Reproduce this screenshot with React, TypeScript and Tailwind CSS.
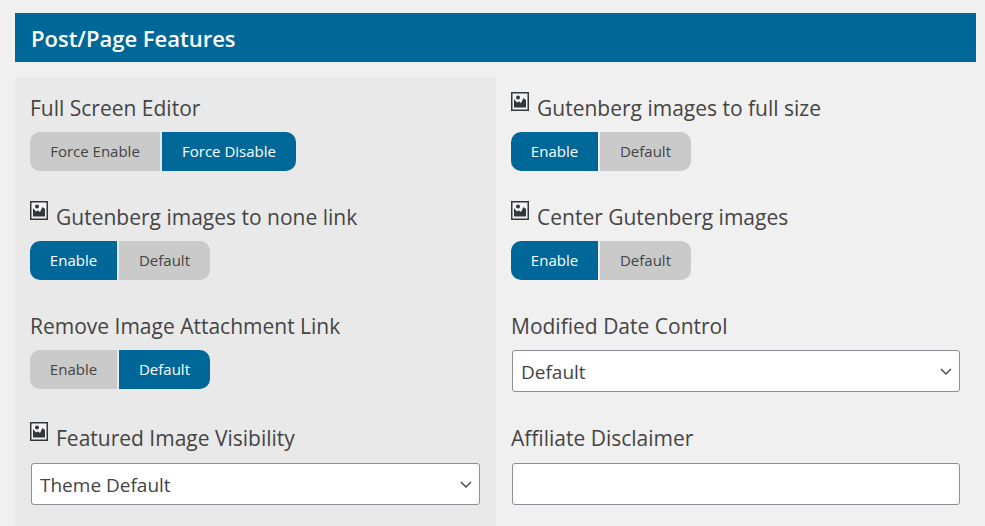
function ImageIcon() {
  return (
    <svg width="18" height="19" viewBox="0 0 18 19" className="mb-[11px] mr-2 inline-block shrink-0">
      <rect x="0.75" y="0.75" width="16.5" height="17.5" fill="#f4f4f4" stroke="#32373c" strokeWidth="1.5" />
      <circle cx="7" cy="5.5" r="2" fill="#32373c" />
      <path d="M3 15.5V7l3 3.5 2-1 2 1.5 2.5-5 2.5 2V15.5z" fill="#32373c" />
    </svg>
  );
}

function Label({ text, icon }: { text: string; icon?: boolean }) {
  return (
    <div className="flex h-[28px] items-end whitespace-nowrap text-[21px] leading-[28px] text-[#444]">
      {icon && <ImageIcon />}
      <span>{text}</span>
    </div>
  );
}

function Toggle({ options, active }: { options: { label: string; width: string }[]; active: number }) {
  return (
    <div className="mt-[10px] flex gap-[2px]">
      {options.map((o, i) => (
        <button
          key={o.label}
          className={`h-[39px] text-[15px] ${o.width} ${i === 0 ? 'rounded-l-[10px]' : 'rounded-r-[10px]'} ${
            i === active ? 'bg-[#006799] text-white' : 'bg-[#cacaca] text-[#444]'
          }`}
        >
          {o.label}
        </button>
      ))}
    </div>
  );
}

function SelectBox({ value, width, gap }: { value: string; width: string; gap: string }) {
  return (
    <div
      className={`ml-px flex h-[42px] items-center justify-between rounded-[3px] border border-[#8c8f94] bg-white pl-[8px] pr-[7px] text-[19px] text-[#444] ${gap} ${width}`}
    >
      <span className="pt-[2px]">{value}</span>
      <svg width="12" height="7" viewBox="0 0 12 7" fill="none" stroke="#444" strokeWidth="1.4">
        <path d="M1 1l5 5 5-5" />
      </svg>
    </div>
  );
}

const enableDefault = [
  { label: 'Enable', width: 'w-[87px]' },
  { label: 'Default', width: 'w-[91px]' },
];

export default function App() {
  return (
    <div className="h-[526px] overflow-hidden bg-[#f0f0f0] pl-[15px] pr-[9px] pt-[13px] font-['Open_Sans',sans-serif]">
      <h2 className="flex h-[49px] items-center bg-[#006799] pl-[16px] pt-px text-[22px] font-semibold text-white">
        Post/Page Features
      </h2>
      <div className="mt-[15px] flex">
        <div className="h-[449px] w-[481px] bg-[#e9e9e9] pl-[15px] pr-[16px] pt-[17px]">
          <div className="h-[109px]">
            <Label text="Full Screen Editor" />
            <Toggle
              active={1}
              options={[
                { label: 'Force Enable', width: 'w-[130px]' },
                { label: 'Force Disable', width: 'w-[134px]' },
              ]}
            />
          </div>
          <div className="h-[109px]">
            <Label text="Gutenberg images to none link" icon />
            <Toggle active={0} options={enableDefault} />
          </div>
          <div className="h-[112px]">
            <Label text="Remove Image Attachment Link" />
            <Toggle active={1} options={enableDefault} />
          </div>
          <div>
            <Label text="Featured Image Visibility" icon />
            <SelectBox value="Theme Default" width="w-[449px]" gap="mt-[11px]" />
          </div>
        </div>
        <div className="flex-1 pl-[15px] pt-[17px]">
          <div className="h-[109px]">
            <Label text="Gutenberg images to full size" icon />
            <Toggle active={0} options={enableDefault} />
          </div>
          <div className="h-[109px]">
            <Label text="Center Gutenberg images" icon />
            <Toggle active={0} options={enableDefault} />
          </div>
          <div className="h-[112px]">
            <Label text="Modified Date Control" />
            <SelectBox value="Default" width="w-[448px]" gap="mt-[10px]" />
          </div>
          <div>
            <Label text="Affiliate Disclaimer" />
            <input className="ml-px mt-[11px] block h-[42px] w-[448px] rounded-[3px] border border-[#8c8f94] bg-white" />
          </div>
        </div>
      </div>
    </div>
  );
}
